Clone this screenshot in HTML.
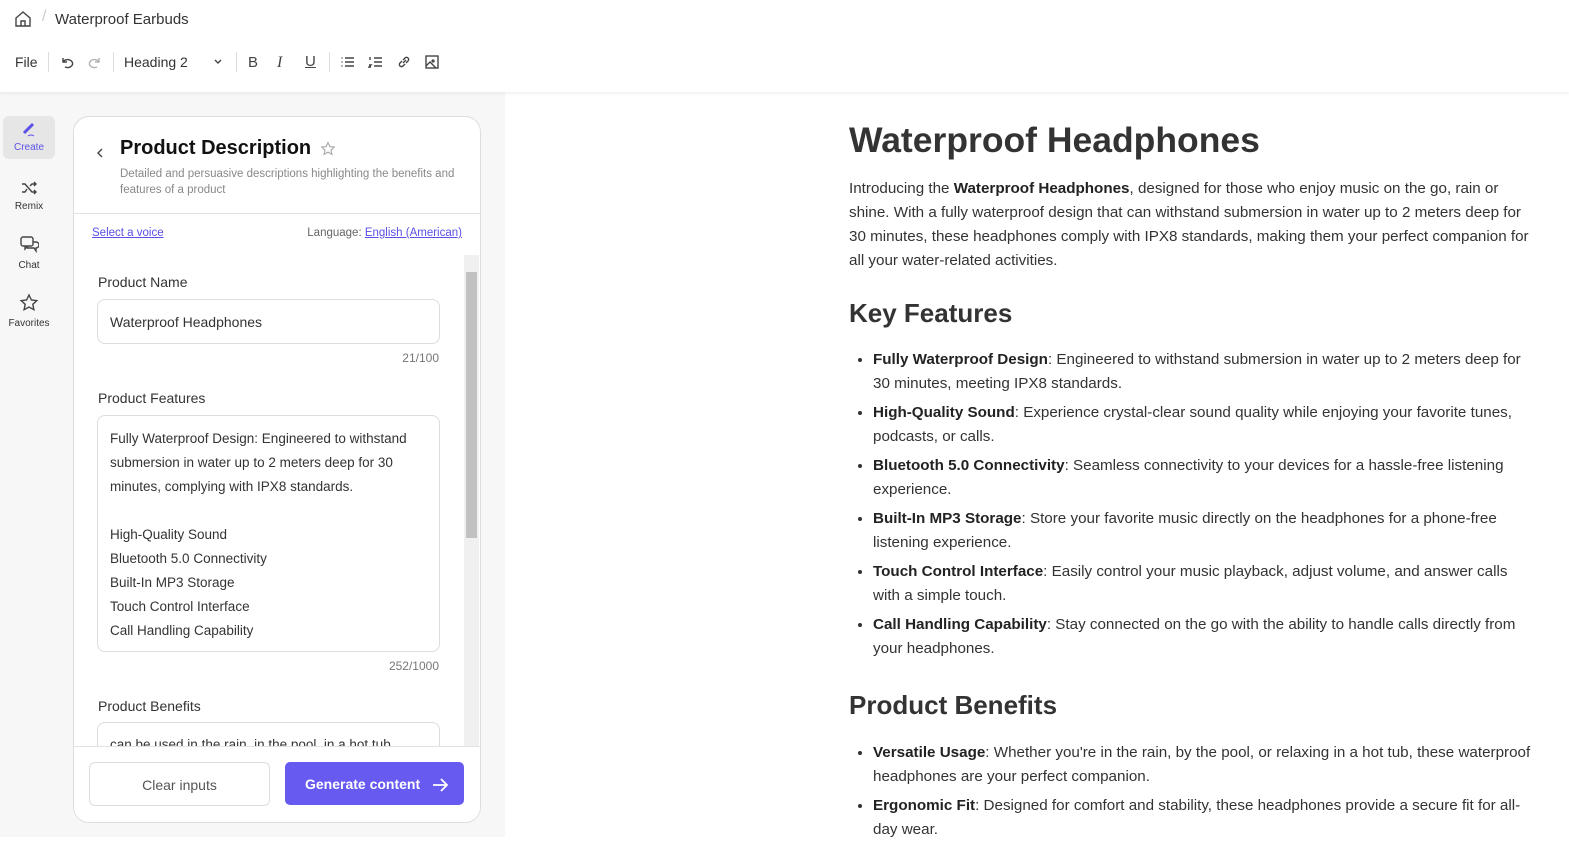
<!DOCTYPE html>
<html><head><meta charset="utf-8"><style>
*{box-sizing:border-box;margin:0;padding:0}
body{width:1569px;height:837px;overflow:hidden;font-family:"Liberation Sans",sans-serif;background:#fff;position:relative;color:#333}
.top{position:absolute;left:0;top:0;width:1569px;height:92px;background:#fff;box-shadow:0 1px 4px rgba(0,0,0,.08);z-index:2}
.ab{position:absolute}
.left{position:absolute;left:0;top:92px;width:505px;height:745px;background:#f7f7f7}
.nav{position:absolute;left:3px;width:52px;text-align:center;font-size:10px;color:#333}
.card{position:absolute;left:73px;top:116px;width:408px;height:707px;background:#fff;border:1px solid #ddd;border-radius:16px;overflow:hidden}
.lbl{position:absolute;left:24px;font-size:14px;color:#333}
.box{position:absolute;left:23px;width:343px;border:1px solid #ddd;border-radius:8px;font-size:14px;color:#333;padding:0 12px}
.cnt{position:absolute;right:41px;font-size:12px;color:#777}
.doc{position:absolute;left:849px;top:118px;width:690px;font-size:15.2px;line-height:24px;color:#333}
.doc h1{font-size:35.5px;font-weight:bold;line-height:44px;margin-bottom:15px;color:#333}
.doc h2{font-size:26px;font-weight:bold;line-height:34px;margin:23px 0 18px;color:#333}
.doc ul{padding-left:24px;margin-bottom:5px}
.doc li{margin-bottom:5px}
.doc b{font-weight:bold;color:#222}
svg{stroke:#444;fill:none;stroke-width:1.4}
</style></head><body>
<div class="top">
 <svg class="ab" style="left:13px;top:9px" width="20" height="20" viewBox="0 0 20 20"><path d="M3 9L10 3l7 6v8H3z M8 17v-5h4v5"/></svg>
 <div class="ab" style="left:42px;top:8px;color:#ccc;font-size:16px">/</div>
 <div class="ab" style="left:55px;top:11px;font-size:15px;color:#333">Waterproof Earbuds</div>
 <div class="ab" style="left:15px;top:54px;font-size:14px">File</div>
 <div class="ab" style="left:48px;top:52px;width:1px;height:20px;background:#ddd"></div>
 <svg class="ab" style="left:59px;top:54px" width="16" height="16" viewBox="0 0 16 16"><path d="M4 4v4h4M4 8a5 4 0 1 1 2 5"/></svg>
 <svg class="ab" style="left:87px;top:54px;opacity:.4" width="16" height="16" viewBox="0 0 16 16"><path d="M12 4v4H8M12 8a5 4 0 1 0-2 5"/></svg>
 <div class="ab" style="left:113px;top:52px;width:1px;height:20px;background:#ddd"></div>
 <div class="ab" style="left:124px;top:54px;font-size:14px">Heading 2</div>
 <svg class="ab" style="left:213px;top:57px" width="10" height="10" viewBox="0 0 10 10"><path d="M2 3l3 3 3-3"/></svg>
 <div class="ab" style="left:236px;top:52px;width:1px;height:20px;background:#ddd"></div>
 <div class="ab" style="left:248px;top:54px;font-size:15px;color:#444">B</div>
 <div class="ab" style="left:277px;top:54px;font-size:16px;font-style:italic;font-family:'Liberation Serif',serif;color:#444">I</div>
 <div class="ab" style="left:305px;top:53px;font-size:15px;text-decoration:underline;color:#444">U</div>
 <div class="ab" style="left:329px;top:52px;width:1px;height:20px;background:#ddd"></div>
 <svg class="ab" style="left:340px;top:55px" width="15" height="14" viewBox="0 0 15 14"><path d="M5 3h9M5 7h9M5 11h9M1.5 3h1M1.5 7h1M1.5 11h1"/></svg>
 <svg class="ab" style="left:368px;top:55px" width="15" height="14" viewBox="0 0 15 14"><path d="M6 3h8M6 7h8M6 11h8M2 2v3M1 10h2l-2 2h2"/></svg>
 <svg class="ab" style="left:396px;top:54px" width="16" height="16" viewBox="0 0 16 16"><path d="M7 9l3-3M6 7L4 9a2 2 0 0 0 3 3l2-2M10 9l2-2a2 2 0 0 0-3-3L7 6"/></svg>
 <svg class="ab" style="left:424px;top:54px" width="16" height="16" viewBox="0 0 16 16"><rect x="2" y="2" width="12" height="12"/><path d="M2 12l4-4 6 6M9 6a1 1 0 1 0 .1 0"/></svg>
</div>
<div class="left">
 <div class="nav" style="top:24px;height:43px;background:#e6e6e6;border-radius:6px;color:#5b50e8">
  <svg style="margin-top:5px;stroke:#5b50e8;stroke-width:3" width="18" height="18" viewBox="0 0 18 18"><path d="M4 12L13 3"/><path d="M8 15q3-2 6 0" style="stroke-width:1"/></svg><div style="margin-top:0px">Create</div></div>
 <div class="nav" style="top:87px"><svg width="18" height="18" viewBox="0 0 18 18"><path d="M2 5h3l7 8h4M2 13h3l2-3M10 7l2-2h4M14 3l2 2-2 2M14 11l2 2-2 2"/></svg><div style="margin-top:1px">Remix</div></div>
 <div class="nav" style="top:143px"><svg width="20" height="20" viewBox="0 0 20 20"><rect x="2" y="2" width="12" height="9" rx="2"/><path d="M6 11v3l3-3M8 13h7l2 3v-3a2 2 0 0 0 0-6h-3"/></svg><div style="margin-top:2px">Chat</div></div>
 <div class="nav" style="top:201px"><svg width="20" height="20" viewBox="0 0 20 20"><path d="M10 2l2.4 5 5.4.6-4 3.7 1.1 5.4L10 14l-4.9 2.7 1.1-5.4-4-3.7 5.4-.6z"/></svg><div style="margin-top:2px">Favorites</div></div>
</div>
<div class="card">
 <svg class="ab" style="left:21px;top:30px" width="10" height="12" viewBox="0 0 10 12"><path d="M7 2L3 6l4 4"/></svg>
 <div class="ab" style="left:46px;top:20px;font-size:20px;font-weight:bold;color:#111">Product Description</div>
 <svg class="ab" style="left:246px;top:24px;stroke:#aaa" width="16" height="16" viewBox="0 0 20 20"><path d="M10 2l2.4 5 5.4.6-4 3.7 1.1 5.4L10 14l-4.9 2.7 1.1-5.4-4-3.7 5.4-.6z"/></svg>
 <div class="ab" style="left:46px;top:49px;width:335px;font-size:11.5px;line-height:16px;color:#888">Detailed and persuasive descriptions highlighting the benefits and features of a product</div>
 <div class="ab" style="left:0;top:96px;width:408px;height:1px;background:#e2e2e2"></div>
 <div class="ab" style="left:18px;top:110px;font-size:11.5px;color:#5b50e8;text-decoration:underline">Select a voice</div>
 <div class="ab" style="right:18px;top:110px;font-size:11.5px;color:#666">Language: <span style="color:#5b50e8;text-decoration:underline">English (American)</span></div>
 <div class="ab" style="left:390px;top:138px;width:15px;height:491px;background:#f0f0f0"><div style="margin:17px 2px 0;height:266px;background:#c1c1c1"></div></div>
 <div class="lbl" style="top:157px">Product Name</div>
 <div class="box" style="top:182px;height:45px;line-height:44px">Waterproof Headphones</div>
 <div class="cnt" style="top:234px">21/100</div>
 <div class="lbl" style="top:273px">Product Features</div>
 <div class="box" style="top:298px;height:237px;padding-top:11px;line-height:24px;font-size:13.5px">Fully Waterproof Design: Engineered to withstand submersion in water up to 2 meters deep for 30 minutes, complying with IPX8 standards.<br><br>High-Quality Sound<br>Bluetooth 5.0 Connectivity<br>Built-In MP3 Storage<br>Touch Control Interface<br>Call Handling Capability</div>
 <div class="cnt" style="top:542px">252/1000</div>
 <div class="lbl" style="top:581px">Product Benefits</div>
 <div class="box" style="top:605px;height:40px;padding-top:14px;font-size:13.5px">can be used in the rain, in the pool, in a hot tub</div>
 <div class="ab" style="left:0;top:629px;width:408px;height:78px;background:#fff;border-top:1px solid #e2e2e2"></div>
 <div class="ab" style="left:15px;top:645px;width:181px;height:44px;border:1px solid #ddd;border-radius:6px;text-align:center;line-height:44px;font-size:14px;color:#555">Clear inputs</div>
 <div class="ab" style="left:211px;top:645px;width:179px;height:43px;background:#675af0;border-radius:5px;color:#fff;font-size:14px;font-weight:bold;line-height:44px;padding-left:20px">Generate content <svg style="stroke:#fff;vertical-align:-3px;margin-left:8px;stroke-width:1.8" width="16" height="14" viewBox="0 0 16 14"><path d="M1 7h14M9 1l6 6-6 6"/></svg></div>
</div>
<div class="doc">
 <h1>Waterproof Headphones</h1>
 <p>Introducing the <b>Waterproof Headphones</b>, designed for those who enjoy music on the go, rain or shine. With a fully waterproof design that can withstand submersion in water up to 2 meters deep for 30 minutes, these headphones comply with IPX8 standards, making them your perfect companion for all your water-related activities.</p>
 <h2>Key Features</h2>
 <ul>
 <li><b>Fully Waterproof Design</b>: Engineered to withstand submersion in water up to 2 meters deep for 30 minutes, meeting IPX8 standards.</li>
 <li><b>High-Quality Sound</b>: Experience crystal-clear sound quality while enjoying your favorite tunes, podcasts, or calls.</li>
 <li><b>Bluetooth 5.0 Connectivity</b>: Seamless connectivity to your devices for a hassle-free listening experience.</li>
 <li><b>Built-In MP3 Storage</b>: Store your favorite music directly on the headphones for a phone-free listening experience.</li>
 <li><b>Touch Control Interface</b>: Easily control your music playback, adjust volume, and answer calls<br>with a simple touch.</li>
 <li><b>Call Handling Capability</b>: Stay connected on the go with the ability to handle calls directly from your headphones.</li>
 </ul>
 <h2 style="margin-top:27px;margin-bottom:19px">Product Benefits</h2>
 <ul>
 <li><b>Versatile Usage</b>: Whether you're in the rain, by the pool, or relaxing in a hot tub, these waterproof headphones are your perfect companion.</li>
 <li><b>Ergonomic Fit</b>: Designed for comfort and stability, these headphones provide a secure fit for all-day wear.</li>
 </ul>
</div>
</body></html>
